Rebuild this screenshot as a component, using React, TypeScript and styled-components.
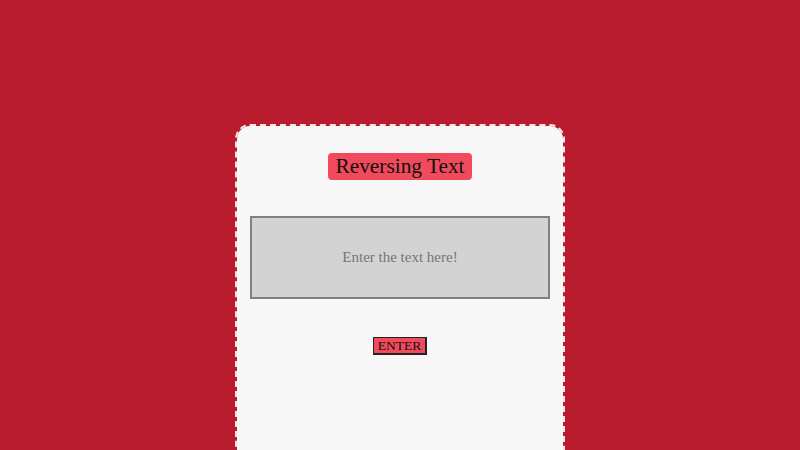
import React from "react";
import styled, { createGlobalStyle } from "styled-components";

const GlobalStyle = createGlobalStyle`
  html, body {
    margin: 0;
    padding: 0;
    background: #b91c2e;
    font-family: "Liberation Serif", "Times New Roman", serif;
  }
`;

const Page = styled.main`
  display: flex;
  justify-content: center;
  padding-top: 124px;
  height: 450px;
  box-sizing: border-box;
  overflow: hidden;
`;

const Card = styled.section`
  width: 330px;
  height: 420px;
  box-sizing: border-box;
  background: #f7f7f7;
  background-clip: padding-box;
  border: 2px dashed #fbe2e2;
  border-radius: 15px;
  padding: 27px 13px 0;
  display: flex;
  flex-direction: column;
  align-items: center;
`;

const Title = styled.h1`
  margin: 0;
  background: #f04a5c;
  color: #111;
  font-weight: normal;
  font-size: 21.33px;
  line-height: 27px;
  padding: 0 7px;
  border-radius: 4px;
`;

const TextField = styled.input`
  margin-top: 36px;
  width: 300px;
  height: 83px;
  box-sizing: border-box;
  border: 2px solid #808080;
  background: #d3d3d3;
  font-family: "Liberation Serif", "Times New Roman", serif;
  font-size: 15px;
  text-align: center;
  color: #333;
  outline: none;
  &::placeholder {
    color: #767676;
  }
`;

const EnterButton = styled.button`
  margin-top: 38px;
  height: 18px;
  padding: 0 4px;
  box-sizing: border-box;
  background: #f04a5c;
  border: 1px solid #222;
  border-right-width: 2px;
  border-bottom-width: 2px;
  font-family: "Liberation Serif", "Times New Roman", serif;
  font-size: 13.5px;
  font-weight: normal;
  line-height: 14px;
  color: #111;
  cursor: pointer;
`;

export default function App() {
  return (
    <>
      <GlobalStyle />
      <Page>
        <Card>
          <Title>Reversing Text</Title>
          <TextField type="text" placeholder="Enter the text here!" />
          <EnterButton type="button">ENTER</EnterButton>
        </Card>
      </Page>
    </>
  );
}
